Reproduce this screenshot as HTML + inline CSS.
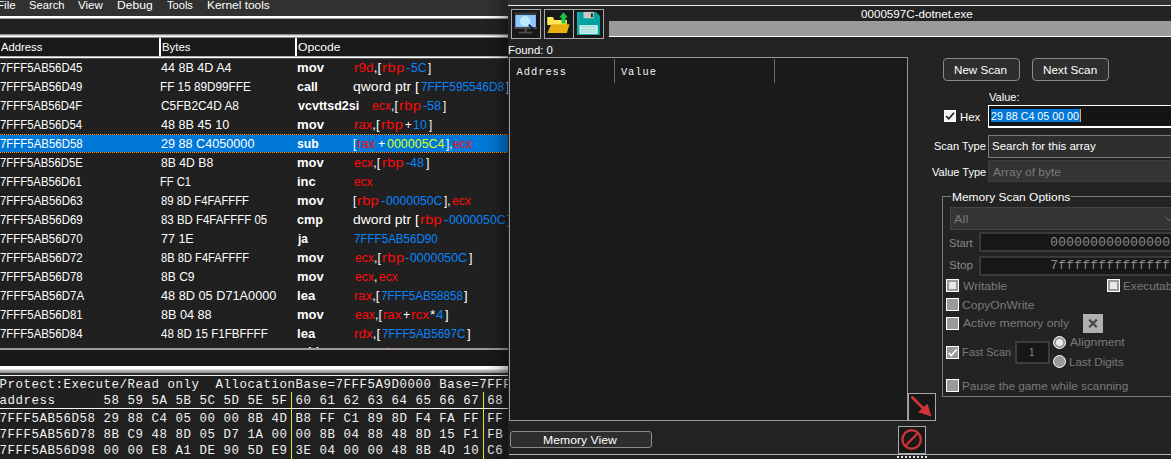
<!DOCTYPE html>
<html><head><meta charset="utf-8"><title>Cheat Engine</title>
<style>
html,body{margin:0;padding:0;background:#222}
#r{position:relative;width:1171px;height:459px;overflow:hidden;background:#232323;font-family:"Liberation Sans",sans-serif;color:#fff}
#r div,#r span.a,#r svg{position:absolute}
.t{white-space:pre;line-height:1;color:#fff;transform-origin:0 0}
.m{white-space:pre;line-height:1;color:#f2f2f2;font-family:"Liberation Mono",monospace;font-size:12.4px;letter-spacing:.56px}
#L{left:0;top:0;width:508px;height:459px;overflow:hidden;background:#202020}
#disc{left:0;top:58px;width:508px;height:290px;overflow:hidden;background:#202020}
#disc .t{margin-top:-58px}
.cb{width:11px;height:11px;border:1px solid #fff;background:#9a9a9a;box-sizing:content-box}
.btn{border:1px solid #8c8c8c;border-radius:4px;background:#2e2e2e;box-sizing:border-box}
.ib{border:1px solid #a8a8a8;background:#181818;box-sizing:border-box}
</style></head><body>
<div id="r">
<!-- ================= LEFT: memory viewer ================= -->
<div id="L">
  <div style="left:0;top:0;width:508px;height:16px;background:#313131"></div>
  <div style="left:0;top:19px;width:508px;height:15px;background:#222"></div>
  <div style="left:0;top:16px;width:508px;height:2px;background:#fff"></div>
  <div style="left:0;top:18px;width:508px;height:1px;background:#a0a0a0"></div>
  <div style="left:0;top:34px;width:508px;height:1px;background:#8a8a8a"></div>
  <div style="left:0;top:35px;width:508px;height:1px;background:#d8d8d8"></div>
  <div style="left:0;top:36px;width:508px;height:1px;background:#fff"></div>
  <div style="left:0;top:37px;width:508px;height:1px;background:#8a8a8a"></div>
  <div style="left:0;top:38px;width:508px;height:18px;background:#191919"></div>
  <div style="left:159px;top:38px;width:2px;height:18px;background:#fff"></div>
  <div style="left:295px;top:38px;width:2px;height:18px;background:#fff"></div>
  <div style="left:0;top:56px;width:508px;height:1px;background:#b4b4b4"></div>
  <div style="left:0;top:57px;width:508px;height:1px;background:#fff"></div>
  <div id="disc">
    <div style="left:0;top:76px;width:508px;height:19px;background:#0078d7"></div>
    <div style="left:0;top:76px;width:508px;height:1px;background:repeating-linear-gradient(90deg,#ff9626 0,#ff9626 1px,#2a2418 1px,#2a2418 2px)"></div>
    <div style="left:0;top:94px;width:508px;height:1px;background:repeating-linear-gradient(90deg,#ff9626 0,#ff9626 1px,#2a2418 1px,#2a2418 2px)"></div>
<div class="t" style="left:0.17px;top:62.00px;font-size:12.5px;transform:scaleX(0.9112)">7FFF5AB56D45</div>
<div class="t" style="left:161.10px;top:62.00px;font-size:12.5px;transform:scaleX(1.0046)">44 8B 4D A4</div>
<div class="t" style="left:296.68px;top:62.00px;font-size:12.5px;transform:scaleX(1.0480);font-weight:700">mov</div>
<div class="t" style="left:353.75px;top:62.00px;font-size:12.5px;transform:scaleX(1.0876)"><span style="color:#ff0a0a">r9d</span>,[</div>
<div class="t" style="left:382.19px;top:62.00px;font-size:12.5px;transform:scaleX(1.1600);letter-spacing:0.533px"><span style="color:#ff0a0a">rbp</span></div>
<div class="t" style="left:406.42px;top:62.00px;font-size:12.5px;transform:scaleX(0.9638)"><span style="color:#0a84ff">-</span></div>
<div class="t" style="left:410.93px;top:62.00px;font-size:12.5px;transform:scaleX(0.9568)"><span style="color:#0a84ff">5C</span></div>
<div class="t" style="left:427.80px;top:62.00px;font-size:12.5px;transform:scaleX(0.9143)">]</div>
<div class="t" style="left:0.17px;top:81.00px;font-size:12.5px;transform:scaleX(0.9112)">7FFF5AB56D49</div>
<div class="t" style="left:160.38px;top:81.00px;font-size:12.5px;transform:scaleX(0.9394)">FF 15 89D99FFE</div>
<div class="t" style="left:297.11px;top:81.00px;font-size:12.5px;transform:scaleX(0.9990);font-weight:700">call</div>
<div class="t" style="left:353.16px;top:81.00px;font-size:12.5px;transform:scaleX(1.1175)">qword ptr [</div>
<div class="t" style="left:420.64px;top:81.00px;font-size:12.5px;transform:scaleX(0.9485)"><span style="color:#0a84ff">7FFF595546D8</span></div>
<div class="t" style="left:505.70px;top:81.00px;font-size:12.5px;transform:scaleX(0.9509)">]</div>
<div class="t" style="left:0.17px;top:100.00px;font-size:12.5px;transform:scaleX(0.9032)">7FFF5AB56D4F</div>
<div class="t" style="left:160.74px;top:100.00px;font-size:12.5px;transform:scaleX(0.9512)">C5FB2C4D A8</div>
<div class="t" style="left:297.50px;top:100.00px;font-size:12.5px;transform:scaleX(1.0015);font-weight:700">vcvttsd2si</div>
<div class="t" style="left:371.52px;top:100.00px;font-size:12.5px;transform:scaleX(0.9827)"><span style="color:#ff0a0a">ecx</span>,[</div>
<div class="t" style="left:398.79px;top:100.00px;font-size:12.5px;transform:scaleX(1.1600);letter-spacing:0.318px"><span style="color:#ff0a0a">rbp</span></div>
<div class="t" style="left:422.52px;top:100.00px;font-size:12.5px;transform:scaleX(0.9638)"><span style="color:#0a84ff">-</span></div>
<div class="t" style="left:427.10px;top:100.00px;font-size:12.5px;transform:scaleX(1.0226)"><span style="color:#0a84ff">58</span></div>
<div class="t" style="left:442.70px;top:100.00px;font-size:12.5px;transform:scaleX(0.9143)">]</div>
<div class="t" style="left:0.17px;top:119.00px;font-size:12.5px;transform:scaleX(0.9092)">7FFF5AB56D54</div>
<div class="t" style="left:161.10px;top:119.00px;font-size:12.5px;transform:scaleX(1.0118)">48 8B 45 10</div>
<div class="t" style="left:296.68px;top:119.00px;font-size:12.5px;transform:scaleX(1.0480);font-weight:700">mov</div>
<div class="t" style="left:353.77px;top:119.00px;font-size:12.5px;transform:scaleX(1.0563)"><span style="color:#ff0a0a">rax</span>,[</div>
<div class="t" style="left:380.59px;top:119.00px;font-size:12.5px;transform:scaleX(1.1600);letter-spacing:0.318px"><span style="color:#ff0a0a">rbp</span></div>
<div class="t" style="left:404.57px;top:119.00px;font-size:12.5px;transform:scaleX(0.9120)">+</div>
<div class="t" style="left:413.03px;top:119.00px;font-size:12.5px;transform:scaleX(0.9913)"><span style="color:#0a84ff">10</span></div>
<div class="t" style="left:428.70px;top:119.00px;font-size:12.5px;transform:scaleX(0.9143)">]</div>
<div class="t" style="left:0.16px;top:138.00px;font-size:12.5px;transform:scaleX(0.9156)">7FFF5AB56D58</div>
<div class="t" style="left:160.71px;top:138.00px;font-size:12.5px;transform:scaleX(1.0104)">29 88 C4050000</div>
<div class="t" style="left:297.12px;top:138.00px;font-size:12.5px;transform:scaleX(0.9709);font-weight:700">sub</div>
<div class="t" style="left:352.86px;top:138.00px;font-size:12.5px;transform:scaleX(0.9509)">[</div>
<div class="t" style="left:357.17px;top:138.00px;font-size:12.5px;transform:scaleX(1.0613)"><span style="color:#ff0a0a">rax</span></div>
<div class="t" style="left:378.02px;top:138.00px;font-size:12.5px;transform:scaleX(0.9920)">+</div>
<div class="t" style="left:387.01px;top:138.00px;font-size:12.5px;transform:scaleX(0.9967)"><span style="color:#dcff24">000005C4</span></div>
<div class="t" style="left:446.00px;top:138.00px;font-size:12.5px;transform:scaleX(0.9481)">],</div>
<div class="t" style="left:453.02px;top:138.00px;font-size:12.5px;transform:scaleX(0.9758)"><span style="color:#ff0a0a">ecx</span></div>
<div class="t" style="left:0.17px;top:157.00px;font-size:12.5px;transform:scaleX(0.9018)">7FFF5AB56D5E</div>
<div class="t" style="left:160.92px;top:157.00px;font-size:12.5px;transform:scaleX(0.9752)">8B 4D B8</div>
<div class="t" style="left:296.69px;top:157.00px;font-size:12.5px;transform:scaleX(1.0400);font-weight:700">mov</div>
<div class="t" style="left:354.41px;top:157.00px;font-size:12.5px;transform:scaleX(0.9904)"><span style="color:#ff0a0a">ecx</span>,[</div>
<div class="t" style="left:381.79px;top:157.00px;font-size:12.5px;transform:scaleX(1.1600);letter-spacing:0.275px"><span style="color:#ff0a0a">rbp</span></div>
<div class="t" style="left:405.62px;top:157.00px;font-size:12.5px;transform:scaleX(0.9638)"><span style="color:#0a84ff">-</span></div>
<div class="t" style="left:410.01px;top:157.00px;font-size:12.5px;transform:scaleX(0.9923)"><span style="color:#0a84ff">48</span></div>
<div class="t" style="left:425.70px;top:157.00px;font-size:12.5px;transform:scaleX(0.9874)">]</div>
<div class="t" style="left:0.17px;top:176.00px;font-size:12.5px;transform:scaleX(0.9056)">7FFF5AB56D61</div>
<div class="t" style="left:160.43px;top:176.00px;font-size:12.5px;transform:scaleX(0.8935)">FF C1</div>
<div class="t" style="left:296.69px;top:176.00px;font-size:12.5px;transform:scaleX(1.0373);font-weight:700">inc</div>
<div class="t" style="left:354.43px;top:176.00px;font-size:12.5px;transform:scaleX(0.9443)"><span style="color:#ff0a0a">ecx</span></div>
<div class="t" style="left:0.16px;top:195.00px;font-size:12.5px;transform:scaleX(0.9156)">7FFF5AB56D63</div>
<div class="t" style="left:160.95px;top:195.00px;font-size:12.5px;transform:scaleX(0.9052)">89 8D F4FAFFFF</div>
<div class="t" style="left:296.69px;top:195.00px;font-size:12.5px;transform:scaleX(1.0400);font-weight:700">mov</div>
<div class="t" style="left:353.06px;top:195.00px;font-size:12.5px;transform:scaleX(0.9509)">[</div>
<div class="t" style="left:357.49px;top:195.00px;font-size:12.5px;transform:scaleX(1.1600);letter-spacing:0.275px"><span style="color:#ff0a0a">rbp</span></div>
<div class="t" style="left:380.90px;top:195.00px;font-size:12.5px;transform:scaleX(1.0240)"><span style="color:#0a84ff">-</span></div>
<div class="t" style="left:385.92px;top:195.00px;font-size:12.5px;transform:scaleX(0.9777)"><span style="color:#0a84ff">0000050C</span></div>
<div class="t" style="left:444.30px;top:195.00px;font-size:12.5px;transform:scaleX(0.9481)">],</div>
<div class="t" style="left:452.12px;top:195.00px;font-size:12.5px;transform:scaleX(0.9653)"><span style="color:#ff0a0a">ecx</span></div>
<div class="t" style="left:0.16px;top:214.00px;font-size:12.5px;transform:scaleX(0.9156)">7FFF5AB56D69</div>
<div class="t" style="left:160.94px;top:214.00px;font-size:12.5px;transform:scaleX(0.9157)">83 BD F4FAFFFF 05</div>
<div class="t" style="left:297.11px;top:214.00px;font-size:12.5px;transform:scaleX(1.0039);font-weight:700">cmp</div>
<div class="t" style="left:353.36px;top:214.00px;font-size:12.5px;transform:scaleX(1.1141)">dword ptr [</div>
<div class="t" style="left:420.49px;top:214.00px;font-size:12.5px;transform:scaleX(1.1600);letter-spacing:0.275px"><span style="color:#ff0a0a">rbp</span></div>
<div class="t" style="left:443.60px;top:214.00px;font-size:12.5px;transform:scaleX(1.0240)"><span style="color:#0a84ff">-</span></div>
<div class="t" style="left:448.52px;top:214.00px;font-size:12.5px;transform:scaleX(0.9812)"><span style="color:#0a84ff">0000050C</span></div>
<div class="t" style="left:507.00px;top:214.00px;font-size:12.5px;transform:scaleX(0.9509)">]</div>
<div class="t" style="left:0.16px;top:233.00px;font-size:12.5px;transform:scaleX(0.9136)">7FFF5AB56D70</div>
<div class="t" style="left:160.71px;top:233.00px;font-size:12.5px;transform:scaleX(1.0014)">77 1E</div>
<div class="t" style="left:297.69px;top:233.00px;font-size:12.5px;transform:scaleX(0.9533);font-weight:700">ja</div>
<div class="t" style="left:354.26px;top:233.00px;font-size:12.5px;transform:scaleX(0.9271)"><span style="color:#0a84ff">7FFF5AB56D90</span></div>
<div class="t" style="left:0.16px;top:252.00px;font-size:12.5px;transform:scaleX(0.9156)">7FFF5AB56D72</div>
<div class="t" style="left:160.95px;top:252.00px;font-size:12.5px;transform:scaleX(0.8924)">8B 8D F4FAFFFF</div>
<div class="t" style="left:296.69px;top:252.00px;font-size:12.5px;transform:scaleX(1.0400);font-weight:700">mov</div>
<div class="t" style="left:354.62px;top:252.00px;font-size:12.5px;transform:scaleX(0.9827)"><span style="color:#ff0a0a">ecx</span>,[</div>
<div class="t" style="left:381.59px;top:252.00px;font-size:12.5px;transform:scaleX(1.1600);letter-spacing:0.447px"><span style="color:#ff0a0a">rbp</span></div>
<div class="t" style="left:405.20px;top:252.00px;font-size:12.5px;transform:scaleX(1.0240)"><span style="color:#0a84ff">-</span></div>
<div class="t" style="left:409.81px;top:252.00px;font-size:12.5px;transform:scaleX(0.9883)"><span style="color:#0a84ff">0000050C</span></div>
<div class="t" style="left:468.60px;top:252.00px;font-size:12.5px;transform:scaleX(0.9874)">]</div>
<div class="t" style="left:0.16px;top:271.00px;font-size:12.5px;transform:scaleX(0.9156)">7FFF5AB56D78</div>
<div class="t" style="left:160.92px;top:271.00px;font-size:12.5px;transform:scaleX(0.9662)">8B C9</div>
<div class="t" style="left:296.69px;top:271.00px;font-size:12.5px;transform:scaleX(1.0400);font-weight:700">mov</div>
<div class="t" style="left:354.62px;top:271.00px;font-size:12.5px;transform:scaleX(0.9815)"><span style="color:#ff0a0a">ecx</span>,</div>
<div class="t" style="left:378.62px;top:271.00px;font-size:12.5px;transform:scaleX(0.9601)"><span style="color:#ff0a0a">ecx</span></div>
<div class="t" style="left:0.16px;top:290.00px;font-size:12.5px;transform:scaleX(0.9169)">7FFF5AB56D7A</div>
<div class="t" style="left:161.10px;top:290.00px;font-size:12.5px;transform:scaleX(1.0188)">48 8D 05 D71A0000</div>
<div class="t" style="left:296.68px;top:290.00px;font-size:12.5px;transform:scaleX(1.0495);font-weight:700">lea</div>
<div class="t" style="left:354.18px;top:290.00px;font-size:12.5px;transform:scaleX(1.0479)"><span style="color:#ff0a0a">rax</span>,[</div>
<div class="t" style="left:381.06px;top:290.00px;font-size:12.5px;transform:scaleX(0.9283)"><span style="color:#0a84ff">7FFF5AB58858</span></div>
<div class="t" style="left:464.40px;top:290.00px;font-size:12.5px;transform:scaleX(1.0240)">]</div>
<div class="t" style="left:0.16px;top:309.00px;font-size:12.5px;transform:scaleX(0.9156)">7FFF5AB56D81</div>
<div class="t" style="left:160.90px;top:309.00px;font-size:12.5px;transform:scaleX(1.0113)">8B 04 88</div>
<div class="t" style="left:296.69px;top:309.00px;font-size:12.5px;transform:scaleX(1.0400);font-weight:700">mov</div>
<div class="t" style="left:354.61px;top:309.00px;font-size:12.5px;transform:scaleX(0.9906)"><span style="color:#ff0a0a">eax</span>,[</div>
<div class="t" style="left:383.08px;top:309.00px;font-size:12.5px;transform:scaleX(1.0493)"><span style="color:#ff0a0a">rax</span></div>
<div class="t" style="left:402.82px;top:309.00px;font-size:12.5px;transform:scaleX(0.9920)">+</div>
<div class="t" style="left:411.26px;top:309.00px;font-size:12.5px;transform:scaleX(1.0704)"><span style="color:#ff0a0a">rcx</span></div>
<div class="t" style="left:429.69px;top:309.00px;font-size:12.5px;transform:scaleX(1.0908)">*</div>
<div class="t" style="left:435.88px;top:309.00px;font-size:12.5px;transform:scaleX(1.1016)"><span style="color:#0a84ff">4</span></div>
<div class="t" style="left:444.80px;top:309.00px;font-size:12.5px;transform:scaleX(1.0240)">]</div>
<div class="t" style="left:0.16px;top:328.00px;font-size:12.5px;transform:scaleX(0.9136)">7FFF5AB56D84</div>
<div class="t" style="left:161.12px;top:328.00px;font-size:12.5px;transform:scaleX(0.9259)">48 8D 15 F1FBFFFF</div>
<div class="t" style="left:296.68px;top:328.00px;font-size:12.5px;transform:scaleX(1.0495);font-weight:700">lea</div>
<div class="t" style="left:354.16px;top:328.00px;font-size:12.5px;transform:scaleX(1.0776)"><span style="color:#ff0a0a">rdx</span>,[</div>
<div class="t" style="left:381.96px;top:328.00px;font-size:12.5px;transform:scaleX(0.9216)"><span style="color:#0a84ff">7FFF5AB5697C</span></div>
<div class="t" style="left:466.70px;top:328.00px;font-size:12.5px;transform:scaleX(1.0606)">]</div>
<div class="t" style="left:297.31px;top:346.00px;font-size:12.5px;transform:scaleX(0.9940);font-weight:700">add</div>
<div class="t" style="left:354.13px;top:346.00px;font-size:12.5px;transform:scaleX(1.1087)"><span style="color:#ff0a0a">rax</span>,</div>
<div class="t" style="left:377.97px;top:346.00px;font-size:12.5px;transform:scaleX(1.0673)"><span style="color:#ff0a0a">rdx</span></div>

  </div>
  <div style="left:0;top:348px;width:508px;height:2px;background:#9c9c9c"></div>
  <div style="left:0;top:350px;width:508px;height:16px;background:#181818"></div>
  <div style="left:0;top:366px;width:508px;height:7px;background:linear-gradient(180deg,#fff 0,#fff 45%,#c4c4c4 55%,#8e8e8e 100%)"></div>
  <div style="left:0;top:373px;width:508px;height:2px;background:#2a2a2a"></div>
  <div style="left:0;top:375px;width:508px;height:1px;background:#f0f0f0"></div>
  <div style="left:0;top:376px;width:508px;height:83px;background:#202020"></div>
  <div class="m" style="left:-0.4px;top:378.5px">Protect:Execute/Read only  AllocationBase=7FFF5A9D0000 Base=7FFF5AB56000 Size=3000</div>
  <div class="m" style="left:-0.4px;top:394.5px">address      58 59 5A 5B 5C 5D 5E 5F 60 61 62 63 64 65 66 67 68 69</div>
  <div style="left:0;top:408px;width:508px;height:1px;background:#f4f4f4"></div>
  <div class="m" style="left:-0.4px;top:412.5px">7FFF5AB56D58 29 88 C4 05 00 00 8B 4D B8 FF C1 89 8D F4 FA FF FF 48</div>
  <div class="m" style="left:-0.4px;top:428.5px">7FFF5AB56D78 8B C9 48 8D 05 D7 1A 00 00 8B 04 88 48 8D 15 F1 FB FF</div>
  <div class="m" style="left:-0.4px;top:444.5px">7FFF5AB56D98 00 00 E8 A1 DE 90 5D E9 3E 04 00 00 48 8B 4D 10 C6 45</div>
  <div style="left:291px;top:392px;width:1px;height:67px;background:#e8e020"></div>
  <div style="left:483px;top:392px;width:1px;height:67px;background:#e8e020"></div>
  <div style="left:0;top:58px;width:508px;height:1px;background:rgba(255,255,255,.2)"></div>
  <div style="left:484px;top:0;width:24px;height:459px;background:linear-gradient(90deg,rgba(0,0,0,0),rgba(0,0,0,.1) 55%,rgba(0,0,0,.34))"></div>
</div>
<!-- ================= RIGHT: main window ================= -->
<div style="left:508px;top:0;width:663px;height:5px;background:#303030"></div>
<div style="left:508px;top:5px;width:663px;height:1px;background:#e8e8e8"></div>
<div style="left:609px;top:21px;width:562px;height:15px;background:#9a9a9a"></div>
<div style="left:609px;top:36px;width:562px;height:1px;background:#fff"></div>
<!-- toolbar buttons -->
<div class="ib" style="left:511px;top:9px;width:30px;height:30px"></div>
<div class="ib" style="left:544px;top:9px;width:30px;height:30px"></div>
<div class="ib" style="left:573px;top:9px;width:31px;height:30px"></div>
<svg style="left:511px;top:9px" width="94" height="30" viewBox="511 9 94 30">
  <!-- monitor + magnifier -->
  <rect x="514" y="12.6" width="23" height="1" fill="#4a4a4a"/>
  <rect x="515.3" y="14.8" width="20.6" height="12.4" fill="#8cc6ff"/>
  <rect x="514" y="27.2" width="23" height="1.8" fill="#4a4a4a"/>
  <rect x="524.3" y="29" width="2.8" height="3" fill="#454545"/>
  <rect x="518.5" y="31.8" width="14" height="1.8" rx=".9" fill="#4a4a4a"/>
  <line x1="528.6" y1="24.6" x2="532.8" y2="28.6" stroke="#0e1c44" stroke-width="1.6" stroke-linecap="round"/>
  <circle cx="525.2" cy="21.2" r="4.7" fill="#b6ecff" stroke="#dfe6ea" stroke-width=".9"/>
  <!-- folder + arrow -->
  <path d="M547.2 17h5.6l1.6 3.1h12.5v5h-19.7z" fill="#ffe458"/>
  <path d="M563.5 12.3l4.2 5.3h-2.2v6h-4v-6h-2.2z" fill="#1fc844"/>
  <path d="M551.2 24.2h18.4l-2.7 8.8h-19.6z" fill="#e6b010"/>
  <!-- floppy -->
  <path d="M577 11.9h19l4.1 4.2v18.8h-23.1z" fill="#00a2a2"/>
  <rect x="577" y="11.9" width="3" height="23" fill="#1cb0b0" opacity=".6"/>
  <rect x="583.5" y="11.9" width="10.3" height="6.4" fill="#c9c9c1"/>
  <rect x="590.9" y="13.3" width="2" height="3.8" fill="#242424"/>
  <rect x="579.4" y="25.1" width="18.4" height="9" fill="#c8f6f0"/>
  <rect x="581" y="26.6" width="15.2" height=".8" fill="#94c4c0"/>
  <rect x="581" y="29.3" width="15.2" height=".8" fill="#94c4c0"/>
  <rect x="581" y="31.6" width="15.2" height=".8" fill="#94c4c0"/>
</svg>
<!-- found list -->
<div style="left:509px;top:57px;width:399px;height:364px;box-sizing:border-box;border:1px solid #9298a0;background:#1a1a1a"></div>
<div style="left:614px;top:59px;width:1px;height:24px;background:#6c6c6c"></div>
<div style="left:774px;top:59px;width:1px;height:24px;background:#6c6c6c"></div>
<div class="m" style="left:516.6px;top:66.6px;font-size:10.4px;letter-spacing:.96px">Address</div>
<div class="m" style="left:620.9px;top:66.6px;font-size:10.4px;letter-spacing:.96px">Value</div>
<!-- memory view button -->
<div class="btn" style="left:510px;top:431px;width:142px;height:17px;border-radius:3px"></div>
<!-- bottom line -->
<div style="left:509px;top:454px;width:662px;height:1px;background:#b4b4b4"></div>
<div style="left:508px;top:455px;width:663px;height:4px;background:#202020"></div>
<div style="left:897px;top:456px;width:30px;height:2px;background:repeating-linear-gradient(90deg,#e8e8e8 0,#e8e8e8 2px,transparent 2px,transparent 4px)"></div>
<!-- arrow button -->
<div class="ib" style="left:908px;top:393px;width:28px;height:28px"></div>
<svg style="left:908px;top:393px" width="28" height="28" viewBox="908 393 28 28">
  <line x1="912.4" y1="397.4" x2="925" y2="410" stroke="#d0343a" stroke-width="2.8" stroke-linecap="round"/>
  <path d="M931.6 416.6L918 412.2L927.4 403.8z" fill="#d0343a"/>
</svg>
<!-- no-sign button -->
<div class="ib" style="left:898px;top:426px;width:28px;height:28px"></div>
<svg style="left:898px;top:426px" width="28" height="28" viewBox="898 426 28 28">
  <circle cx="911.6" cy="439.5" r="9.2" fill="none" stroke="#cc3238" stroke-width="2.4"/>
  <line x1="905.2" y1="446" x2="918" y2="433" stroke="#cc3238" stroke-width="2.4"/>
</svg>
<!-- scan buttons -->
<div class="btn" style="left:943px;top:58px;width:77px;height:23px"></div>
<div class="btn" style="left:1032px;top:58px;width:77px;height:23px"></div>
<!-- hex checkbox -->
<div style="left:944px;top:110px;width:12px;height:12px;background:#f4f4f4;border:1px solid #fff;box-sizing:border-box"></div>
<svg style="left:944px;top:110px" width="12" height="12" viewBox="0 0 12 12"><path d="M2.2 6.2L4.8 8.8L10 2.8" fill="none" stroke="#222" stroke-width="1.7"/></svg>
<!-- value input -->
<div style="left:988px;top:105px;width:200px;height:23px;box-sizing:border-box;border:1px solid #fff;border-bottom-width:2px;background:#141414"></div>
<div style="left:991px;top:109px;width:89px;height:13px;background:#0078d7"></div>
<div style="left:1080px;top:109px;width:1px;height:13px;background:#ff9a40"></div>
<!-- scan type combo -->
<div style="left:988px;top:135px;width:200px;height:23px;box-sizing:border-box;border:1px solid #7c7c7c;background:#2e2e2e"></div>
<!-- value type combo -->
<div style="left:988px;top:160px;width:200px;height:22px;box-sizing:border-box;border:1px solid #3c3c3c;background:#343434"></div>
<!-- group box -->
<div style="left:942px;top:196px;width:260px;height:201px;box-sizing:border-box;border:1px solid #7a7a7a"></div>
<div style="left:951px;top:190px;width:120px;height:14px;background:#232323"></div>
<div style="left:950px;top:207px;width:240px;height:23px;box-sizing:border-box;border:1px solid #444;background:#343434"></div>
<svg style="left:1160px;top:214px" width="11" height="10" viewBox="0 0 11 10"><path d="M5 2.5L9.5 7L14 2.5" fill="none" stroke="#707070" stroke-width="1"/></svg>
<div style="left:979px;top:232px;width:220px;height:20px;box-sizing:border-box;border:2px solid #3a3a3a;background:#171717"></div>
<div style="left:979px;top:256px;width:220px;height:20px;box-sizing:border-box;border:2px solid #3a3a3a;background:#171717"></div>
<div class="m" style="left:1050.2px;top:237.3px;color:#8e8e8e;font-size:12.8px;letter-spacing:.32px">0000000000000000</div>
<div class="m" style="left:1050.2px;top:260.1px;color:#8e8e8e;font-size:12.8px;letter-spacing:.32px">7fffffffffffffff</div>
<!-- checkboxes -->
<div style="left:946px;top:279px;width:13px;height:13px;box-sizing:border-box;border:1px solid #fff;background:#9a9a9a"></div>
<div style="left:949px;top:282px;width:7px;height:7px;background:#e8e8e8"></div>
<div style="left:1107px;top:279px;width:13px;height:13px;box-sizing:border-box;border:1px solid #fff;background:#9a9a9a"></div>
<div style="left:1110px;top:282px;width:7px;height:7px;background:#e8e8e8"></div>
<div class="cb" style="left:946px;top:298px"></div>
<div class="cb" style="left:946px;top:317px"></div>
<div class="cb" style="left:946px;top:346px"></div>
<svg style="left:946px;top:346px" width="13" height="13" viewBox="0 0 13 13"><path d="M2.6 6.8L5.2 9.6L10.8 3.2" fill="none" stroke="#fff" stroke-width="1.6"/></svg>
<div class="cb" style="left:946px;top:379px"></div>
<!-- X button -->
<div style="left:1083px;top:314px;width:20px;height:19px;background:#b0b0b0"></div>
<svg style="left:1083px;top:314px" width="20" height="19" viewBox="0 0 20 19"><path d="M6.2 5.6L13.8 13.2M13.8 5.6L6.2 13.2" stroke="#484848" stroke-width="2.2"/></svg>
<!-- fast scan input -->
<div style="left:1015px;top:341px;width:35px;height:23px;box-sizing:border-box;border:2px solid #3c3c3c;background:#171717"></div>
<!-- radios -->
<div style="left:1053px;top:336px;width:13px;height:13px;border-radius:50%;box-sizing:border-box;border:1px solid #fff;background:#9a9a9a"></div>
<div style="left:1056px;top:339px;width:7px;height:7px;border-radius:50%;background:#ebebeb"></div>
<div style="left:1053px;top:355px;width:13px;height:13px;border-radius:50%;box-sizing:border-box;border:1px solid #fff;background:#9a9a9a"></div>
<!-- texts -->
<div class="t" style="left:-3.31px;top:0.00px;font-size:11.5px;transform:scaleX(1.0136)">File</div>
<div class="t" style="left:28.85px;top:0.00px;font-size:11.5px;transform:scaleX(0.9737)">Search</div>
<div class="t" style="left:78.20px;top:0.00px;font-size:11.5px;transform:scaleX(1.0057)">View</div>
<div class="t" style="left:117.06px;top:0.00px;font-size:11.5px;transform:scaleX(1.0512)">Debug</div>
<div class="t" style="left:167.43px;top:0.00px;font-size:11.5px;transform:scaleX(0.9655)">Tools</div>
<div class="t" style="left:206.67px;top:0.00px;font-size:11.5px;transform:scaleX(1.0341)">Kernel tools</div>
<div class="t" style="left:1.00px;top:42.00px;font-size:11.5px;transform:scaleX(0.9802)">Address</div>
<div class="t" style="left:161.91px;top:42.00px;font-size:11.5px;transform:scaleX(0.9926)">Bytes</div>
<div class="t" style="left:298.03px;top:42.00px;font-size:11.5px;transform:scaleX(1.0542)">Opcode</div>
<div class="t" style="left:860.84px;top:9.00px;font-size:11.5px;transform:scaleX(1.0110)">0000597C-dotnet.exe</div>
<div class="t" style="left:508.41px;top:45.00px;font-size:11.5px;transform:scaleX(0.9885)">Found: 0</div>
<div class="t" style="left:543.25px;top:435.00px;font-size:11.5px;transform:scaleX(1.0628)">Memory View</div>
<div class="t" style="left:954.49px;top:65.00px;font-size:11.5px;transform:scaleX(1.0105)">New Scan</div>
<div class="t" style="left:1043.38px;top:65.00px;font-size:11.5px;transform:scaleX(1.0212)">Next Scan</div>
<div class="t" style="left:988.60px;top:92.00px;font-size:11.5px;transform:scaleX(0.9637)">Value:</div>
<div class="t" style="left:959.81px;top:112.00px;font-size:11.5px;transform:scaleX(0.9871)">Hex</div>
<div class="t" style="left:991.30px;top:111.00px;font-size:11.5px;transform:scaleX(0.9296)">29 88 C4 05 00 00</div>
<div class="t" style="left:934.26px;top:141.00px;font-size:11.5px;transform:scaleX(0.9568)">Scan Type</div>
<div class="t" style="left:992.14px;top:141.00px;font-size:11.5px;transform:scaleX(1.0012)">Search for this array</div>
<div class="t" style="left:931.80px;top:167.00px;font-size:11.5px;transform:scaleX(0.9605)">Value Type</div>
<div class="t" style="left:992.50px;top:167.00px;font-size:11.5px;transform:scaleX(1.0428)"><span style="color:#7a7a7a">Array of byte</span></div>
<div class="t" style="left:951.67px;top:192.00px;font-size:11.5px;transform:scaleX(1.0399)">Memory Scan Options</div>
<div class="t" style="left:954.30px;top:214.00px;font-size:11.5px;transform:scaleX(1.1146)"><span style="color:#7a7a7a">All</span></div>
<div class="t" style="left:949.25px;top:238.00px;font-size:11.5px;transform:scaleX(0.9680)"><span style="color:#8a8a8a">Start</span></div>
<div class="t" style="left:949.23px;top:260.00px;font-size:11.5px;transform:scaleX(1.0161)"><span style="color:#8a8a8a">Stop</span></div>
<div class="t" style="left:962.50px;top:281.00px;font-size:11.5px;transform:scaleX(1.0505)"><span style="color:#7a7a7a">Writable</span></div>
<div class="t" style="left:1122.58px;top:281.00px;font-size:11.5px;transform:scaleX(1.0264)"><span style="color:#7a7a7a">Executable</span></div>
<div class="t" style="left:961.93px;top:300.00px;font-size:11.5px;transform:scaleX(1.0530)"><span style="color:#7a7a7a">CopyOnWrite</span></div>
<div class="t" style="left:962.70px;top:318.00px;font-size:11.5px;transform:scaleX(1.0575)"><span style="color:#7a7a7a">Active memory only</span></div>
<div class="t" style="left:961.85px;top:347.00px;font-size:11.5px;transform:scaleX(0.9477)"><span style="color:#7a7a7a">Fast Scan</span></div>
<div class="t" style="left:1028.92px;top:347.00px;font-size:11.5px;transform:scaleX(0.8500)"><span style="color:#8a8a8a">1</span></div>
<div class="t" style="left:1069.80px;top:337.00px;font-size:11.5px;transform:scaleX(1.0708)"><span style="color:#7a7a7a">Alignment</span></div>
<div class="t" style="left:1068.89px;top:357.00px;font-size:11.5px;transform:scaleX(1.0147)"><span style="color:#7a7a7a">Last Digits</span></div>
<div class="t" style="left:961.78px;top:381.00px;font-size:11.5px;transform:scaleX(1.0234)"><span style="color:#7a7a7a">Pause the game while scanning</span></div>

</div>
</body></html>
